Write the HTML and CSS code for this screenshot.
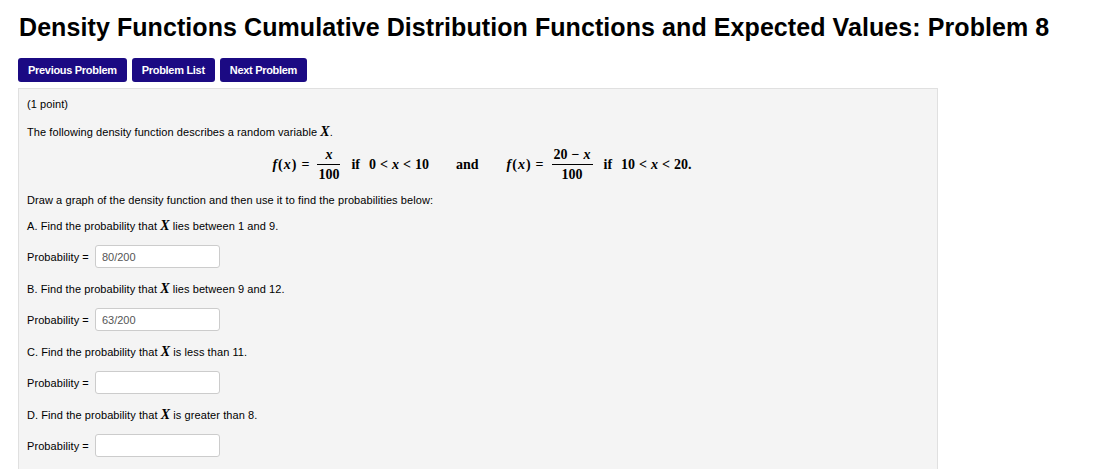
FILE: index.html
```html
<!DOCTYPE html>
<html lang="en">
<head>
    <meta charset="UTF-8" />
    <title>Density Functions Cumulative Distribution Functions and Expected Values: Problem 8</title>
    <link rel="stylesheet" href="styles.css">
</head>
<body>
    <h1 class="page-title">Density Functions Cumulative Distribution Functions and Expected Values: Problem 8</h1>

    <div class="nav-buttons">
        <a class="nav-btn" href="#">Previous Problem</a>
        <a class="nav-btn" href="#">Problem List</a>
        <a class="nav-btn" href="#">Next Problem</a>
    </div>

    <div class="problem">
        <p class="points">(1 point)</p>
        <p>The following density function describes a random variable <span class="mvar">X</span>.</p>

        <div class="display-math">
            <span class="mi">f</span><span class="mo">(</span><span class="mi">x</span><span class="mo">)</span>
            <span class="rel">=</span>
            <span class="frac"><span class="num"><span class="mi">x</span></span><span class="den">100</span></span>
            <span class="txt">if</span>
            <span>0</span><span class="rel">&lt;</span><span class="mi">x</span><span class="rel">&lt;</span><span>10</span>
            <span class="txt and">and</span>
            <span class="mi">f</span><span class="mo">(</span><span class="mi">x</span><span class="mo">)</span>
            <span class="rel">=</span>
            <span class="frac"><span class="num">20<span class="bin">&minus;</span><span class="mi">x</span></span><span class="den">100</span></span>
            <span class="txt">if</span>
            <span>10</span><span class="rel">&lt;</span><span class="mi">x</span><span class="rel">&lt;</span><span>20.</span>
        </div>

        <p>Draw a graph of the density function and then use it to find the probabilities below:</p>

        <p>A. Find the probability that <span class="mvar">X</span> lies between 1 and 9.</p>
        <p class="answer">Probability = <input type="text" value="80/200"></p>

        <p>B. Find the probability that <span class="mvar">X</span> lies between 9 and 12.</p>
        <p class="answer">Probability = <input type="text" value="63/200"></p>

        <p>C. Find the probability that <span class="mvar">X</span> is less than 11.</p>
        <p class="answer">Probability = <input type="text" value=""></p>

        <p>D. Find the probability that <span class="mvar">X</span> is greater than 8.</p>
        <p class="answer">Probability = <input type="text" value=""></p>
    </div>
</body>
</html>
```

FILE: styles.css
```css
body {
    font-family: "Liberation Sans", Arial, sans-serif;
    margin: 0;
    padding: 0 0 0 18px;
    color: #000;
    background: #fff;
}
.page-title {
    font-size: 25px;
    font-weight: bold;
    margin: 0;
    padding: 13px 0 0 1px;
    line-height: 29px;
    letter-spacing: 0.08px;
}
.nav-buttons {
    display: flex;
    gap: 5px;
    margin-top: 16px;
}
.nav-btn {
    display: inline-block;
    background-color: #1b0a83;
    color: #fff;
    font-size: 11px;
    font-weight: bold;
    text-decoration: none;
    padding: 0 10px;
    height: 24px;
    line-height: 24px;
    border-radius: 3px;
    letter-spacing: -0.3px;
}
.problem {
    width: 910px;
    margin-top: 6px;
    background: #f4f4f4;
    border: 1px solid #e0e0e0;
    border-bottom: none;
    padding: 8px 0 0 8px;
    font-size: 11px;
    letter-spacing: 0.08px;
    height: 380px;
}
.problem p {
    margin: 0 0 12px 0;
    line-height: 14px;
}
.problem p.points {
    margin-bottom: 14px;
}
.mvar {
    font-family: "Liberation Serif", "Times New Roman", serif;
    font-style: italic;
    font-weight: bold;
    font-size: 14px;
}
.display-math {
    display: flex;
    align-items: center;
    justify-content: center;
    font-family: "Liberation Serif", "Times New Roman", serif;
    font-size: 14px;
    font-weight: bold;
    letter-spacing: 0;
    height: 40px;
    margin: -6px 0 8px 0;
}
.display-math .mi {
    font-style: italic;
}
.display-math .rel {
    margin: 0 4px;
}
.display-math .mo {
    margin: 0 1px;
}
.frac {
    display: inline-flex;
    flex-direction: column;
    align-items: center;
    margin: 0 3px 0 5px;
}
.frac .num {
    border-bottom: 1px solid #000;
    padding: 0 1px 1px;
    width: 100%;
    text-align: center;
}
.frac .den {
    padding-top: 2px;
}
.display-math .txt {
    margin: 0 9px 0 9px;
}
.display-math .and {
    margin: 0 28px 0 27px;
}
.display-math .bin {
    margin: 0 4px;
}
.answer {
    display: flex;
    align-items: center;
    gap: 6px;
}
.problem p.answer {
    margin-bottom: 14px;
}
.answer input {
    box-sizing: border-box;
    border: 1px solid #ccc;
    border-radius: 3px;
    background: #fff;
    font-family: "Liberation Sans", Arial, sans-serif;
    font-size: 11px;
    color: #555;
    padding: 0 6px;
    height: 23px;
    width: 125px;
}
```
